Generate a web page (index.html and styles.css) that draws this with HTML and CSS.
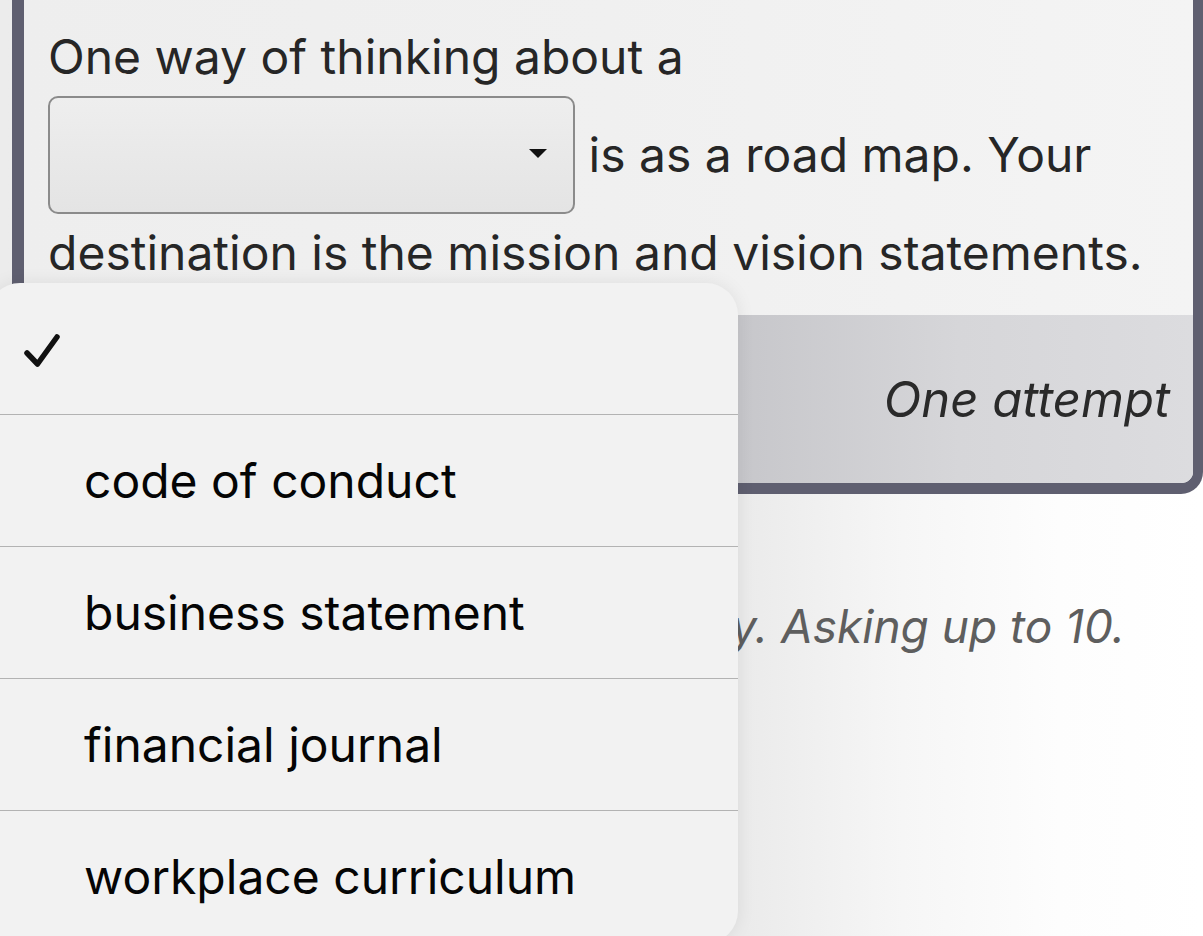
FILE: index.html
```html
<!DOCTYPE html>
<html lang="en">
<head>
<meta charset="utf-8">
<title>Question</title>
<link rel="stylesheet" href="styles.css">
</head>
<body>
  <div class="page">
    <div class="card">
      <div class="qtext">One way of thinking about a <span class="select"><span class="arrow"></span></span> is as a road map. Your destination is the mission and vision statements.</div>
      <div class="footer"><span class="attempts">One attempt</span></div>
    </div>
    <p class="note">Answer each question individually. Asking up to 10.</p>
  </div>
  <div class="popover">
    <div class="opt opt-selected">
      <svg class="check" width="40" height="40" viewBox="0 0 40 40"><path d="M5 23 L15.5 34 L35 7" fill="none" stroke="#111" stroke-width="5.5" stroke-linecap="round" stroke-linejoin="round"/></svg>
    </div>
    <div class="opt">code of conduct</div>
    <div class="opt">business statement</div>
    <div class="opt">financial journal</div>
    <div class="opt">workplace curriculum</div>
  </div>
</body>
</html>
```
FILE: styles.css
```css
html, body {
  margin: 0;
  padding: 0;
}
body {
  width: 1203px;
  height: 936px;
  overflow: hidden;
  position: relative;
  font-family: Inter, "Noto Sans", "Liberation Sans", sans-serif;
  background: linear-gradient(90deg, #ececec 0%, #ebebeb 62%, #f6f6f6 75%, #fdfdfd 88%, #ffffff 100%);
}
.page {
  padding-left: 12px;
}
.card {
  border-style: solid;
  border-color: #5f5f70;
  border-width: 0 10px 11px 12px;
  border-bottom-right-radius: 22px;
  overflow: hidden;
  background: linear-gradient(90deg, #eeeeee 0%, #f0f0f0 50%, #f4f4f4 100%);
}
.qtext {
  padding: 21px 26px 26px 24px;
  font-size: 48px;
  line-height: 72px;
  color: #262626;
}
.select {
  display: inline-block;
  box-sizing: border-box;
  width: 527px;
  height: 118px;
  margin: 3px 0;
  border: 2px solid #8b8b8b;
  border-radius: 10px;
  background: linear-gradient(180deg, #eeeeee, #e4e4e4);
  line-height: 114px;
  text-align: right;
  padding-right: 26px;
  vertical-align: baseline;
}
.arrow {
  display: inline-block;
  width: 0;
  height: 0;
  border-left: 9px solid transparent;
  border-right: 9px solid transparent;
  border-top: 9px solid #111;
  vertical-align: 14px;
}
.footer {
  height: 168px;
  display: flex;
  align-items: center;
  justify-content: flex-end;
  padding-right: 23px;
  background: linear-gradient(90deg, #bfbfc3 0%, #c6c6ca 60%, #d6d6d9 80%, #dcdcdf 100%);
}
.attempts {
  font-style: italic;
  font-size: 49px;
  color: #2a2a2a;
}
.note {
  margin: 96px 0 0 0;
  text-align: right;
  padding-right: 90px;
  font-style: italic;
  font-size: 46px;
  line-height: 72px;
  color: #5e5e5e;
  white-space: nowrap;
}
.popover {
  position: absolute;
  left: -12px;
  top: 283px;
  width: 750px;
  height: 660px;
  background: #f2f2f2;
  border-radius: 32px;
  box-shadow: 0 0 18px rgba(0, 0, 0, 0.08);
  display: flex;
  flex-direction: column;
  overflow: hidden;
}
.opt {
  height: 131px;
  flex: none;
  display: flex;
  align-items: center;
  padding-left: 96px;
  font-size: 48px;
  color: #050505;
  border-bottom: 1px solid #b3b3b3;
}
.opt:last-child {
  border-bottom: 0;
}
.opt-selected {
  padding-left: 34px;
}
.check {
  margin-top: 2px;
}
```
